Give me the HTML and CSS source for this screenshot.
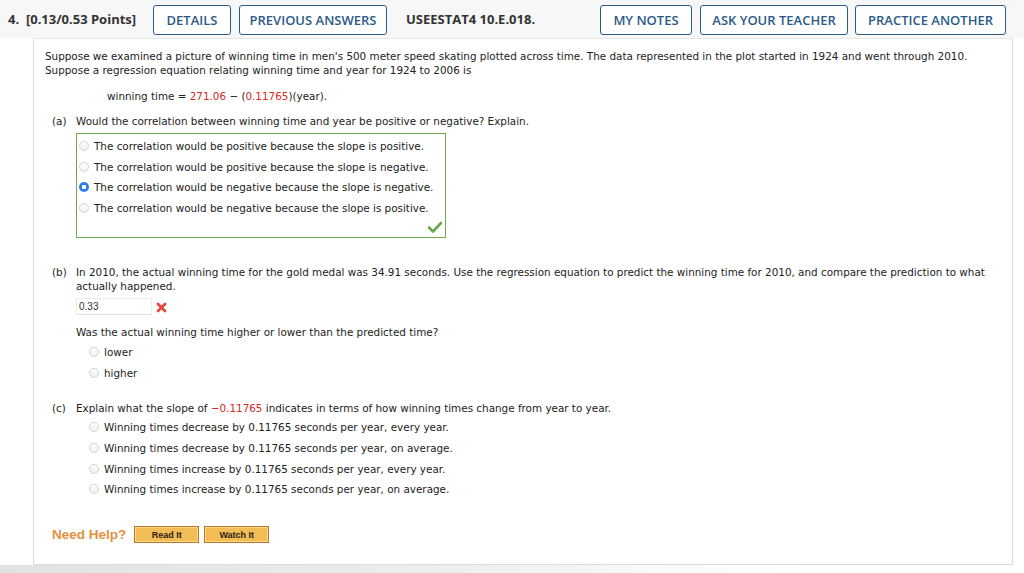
FILE: index.html
```html
<!DOCTYPE html>
<html>
<head>
<meta charset="utf-8">
<link rel="stylesheet" href="styles.css">
</head>
<body>
<div class="header">
  <div class="qnum">4.&nbsp; [0.13/0.53 Points]</div>
  <div class="btn btn-details">DETAILS</div>
  <div class="btn btn-prev">PREVIOUS ANSWERS</div>
  <div class="qid">USEESTAT4 10.E.018.</div>
  <div class="spacer"></div>
  <div class="btn btn-notes">MY NOTES</div>
  <div class="btn btn-ask">ASK YOUR TEACHER</div>
  <div class="btn btn-practice">PRACTICE ANOTHER</div>
</div>
<div class="card">
  <p class="intro">Suppose we examined a picture of winning time in men's 500 meter speed skating plotted across time. The data represented in the plot started in 1924 and went through 2010.<br>Suppose a regression equation relating winning time and year for 1924 to 2006 is</p>
  <p class="equation">winning time = <span class="red">271.06</span> &minus; (<span class="red">0.11765</span>)(year).</p>

  <div class="part part-a">
    <div class="label">(a)</div>
    <div class="content">
      <div class="line">Would the correlation between winning time and year be positive or negative? Explain.</div>
      <div class="answerbox">
        <div class="opt"><span class="radio"></span>The correlation would be positive because the slope is positive.</div>
        <div class="opt"><span class="radio"></span>The correlation would be positive because the slope is negative.</div>
        <div class="opt"><span class="radio checked"></span>The correlation would be negative because the slope is negative.</div>
        <div class="opt"><span class="radio"></span>The correlation would be negative because the slope is positive.</div>
        <svg class="check" width="14" height="12" viewBox="0 0 14 12"><path d="M1 6.5 L5 10.5 L13 2" fill="none" stroke="#6aa84f" stroke-width="2.6" stroke-linecap="round" stroke-linejoin="round"/></svg>
      </div>
    </div>
  </div>

  <div class="part part-b">
    <div class="label">(b)</div>
    <div class="content">
      <div class="line">In 2010, the actual winning time for the gold medal was 34.91 seconds. Use the regression equation to predict the winning time for 2010, and compare the prediction to what actually happened.</div>
      <div class="inputrow">
        <div class="input">0.33</div>
        <svg class="cross" width="11" height="11" viewBox="0 0 11 11"><path d="M2 2 L9 9 M9 2 L2 9" stroke="#e0483e" stroke-width="2.8" stroke-linecap="round"/></svg>
      </div>
      <div class="line q2">Was the actual winning time higher or lower than the predicted time?</div>
      <div class="opts-indent">
        <div class="opt"><span class="radio"></span>lower</div>
        <div class="opt"><span class="radio"></span>higher</div>
      </div>
    </div>
  </div>

  <div class="part part-c">
    <div class="label">(c)</div>
    <div class="content">
      <div class="line">Explain what the slope of <span class="red">&minus;0.11765</span> indicates in terms of how winning times change from year to year.</div>
      <div class="opts-indent">
        <div class="opt"><span class="radio"></span>Winning times decrease by 0.11765 seconds per year, every year.</div>
        <div class="opt"><span class="radio"></span>Winning times decrease by 0.11765 seconds per year, on average.</div>
        <div class="opt"><span class="radio"></span>Winning times increase by 0.11765 seconds per year, every year.</div>
        <div class="opt"><span class="radio"></span>Winning times increase by 0.11765 seconds per year, on average.</div>
      </div>
    </div>
  </div>

  <div class="help">
    <span class="need">Need Help?</span>
    <span class="hbtn">Read It</span>
    <span class="hbtn">Watch It</span>
  </div>
</div>
<div class="shadow"></div>
</body>
</html>
```

FILE: styles.css
```css
* { box-sizing: border-box; }
html, body { margin: 0; padding: 0; background: #fff; }
body { width: 1024px; height: 573px; overflow: hidden; font-family: "DejaVu Sans", Verdana, sans-serif; color: #222; }

.header {
  height: 38px;
  background: #f7f7f7;
  display: flex;
  align-items: center;
  padding-left: 8px;
  padding-right: 18px;
  font-family: "Open Sans", "Liberation Sans", sans-serif;
  font-size: 13px;
}
.qnum { font-weight: 700; color: #333; width: 145px; }
.qid { font-weight: 700; color: #333; margin-left: 19px; }
.spacer { flex: 1; }
.btn {
  height: 30px;
  border: 1.5px solid #2f5b87;
  border-radius: 3px;
  background: #fff;
  color: #2c5a88;
  font-weight: 600;
  display: flex;
  align-items: center;
  justify-content: center;
  margin-top: 1px;
}
.btn-details { width: 78px; }
.btn-prev { width: 148px; margin-left: 8px; }
.btn-notes { width: 92px; }
.btn-ask { width: 148px; margin-left: 8px; }
.btn-practice { width: 151px; margin-left: 7px; }

.card {
  margin-left: 33px;
  width: 980px;
  height: 527px;
  border: 1px solid #dcdcdc;
  border-top-color: #e6e6e6;
  padding: 10px 11px 0 11px;
  font-size: 10.4px;
  line-height: 14px;
}
.card p { margin: 0; }
.red { color: #d8281e; }
.equation { margin-top: 12px !important; padding-left: 62px; }

.part { display: flex; padding-left: 7px; }
.label { width: 24px; flex: none; }
.content { flex: 1; }
.part-a { margin-top: 11px; }
.part-b { margin-top: 27px; }
.part-c { margin-top: 15px; }

.answerbox {
  position: relative;
  margin-top: 5px;
  width: 370px;
  height: 105px;
  border: 1px solid #74a84c;
  padding: 5px 0 0 0;
}
.answerbox .opt { padding-left: 17px; }
.opt { height: 20.7px; display: flex; align-items: flex-start; position: relative; white-space: nowrap; }
.radio {
  position: absolute;
  left: 2px;
  top: 2px;
  width: 10px;
  height: 10px;
  border-radius: 50%;
  border: 1px solid #d4d4d4;
  background: linear-gradient(#fff, #f0f0f0);
}
.radio.checked {
  border: none;
  background: radial-gradient(circle, #fff 0 2px, #2f7fe8 2.5px);
}
.check { position: absolute; right: 3px; bottom: 4px; }

.inputrow { display: flex; align-items: center; margin-top: 5px; height: 17px; }
.input {
  width: 76px;
  height: 17px;
  border: 1px solid #ececec;
  border-bottom-color: #e0e0e0;
  font-family: "Liberation Sans", Arial, sans-serif;
  font-size: 10px;
  line-height: 15px;
  padding-left: 2px;
  color: #333;
}
.cross { margin-left: 4px; margin-top: 1px; }
.q2 { margin-top: 10px; }

.opts-indent { margin-top: 6px; padding-left: 18px; }
.opts-indent .opt { padding-left: 10px; }
.opts-indent .radio { left: -5px; }
.part-c .opts-indent { margin-top: 5px; }

.help {
  display: flex;
  align-items: center;
  margin-top: 23px;
  padding-left: 7px;
  height: 17px;
}
.need {
  font-family: "Liberation Sans", Arial, sans-serif;
  font-weight: 700;
  font-size: 13.5px;
  color: #e3913e;
  margin-right: 8px;
}
.hbtn {
  width: 65px;
  height: 17px;
  border: 1px solid #b7782d;
  box-shadow: inset 0 0 0 1px #f9d888;
  background: #f2bd55;
  font-family: "Liberation Sans", Arial, sans-serif;
  font-weight: 700;
  font-size: 9px;
  color: #2a2115;
  display: flex;
  align-items: center;
  justify-content: center;
  margin-right: 5px;
}
.shadow {
  height: 8px;
  width: 1024px;
  background: linear-gradient(90deg, #e2e2e2 0%, #ececec 40%, #fafafa 65%, #fff 80%);
}
```
